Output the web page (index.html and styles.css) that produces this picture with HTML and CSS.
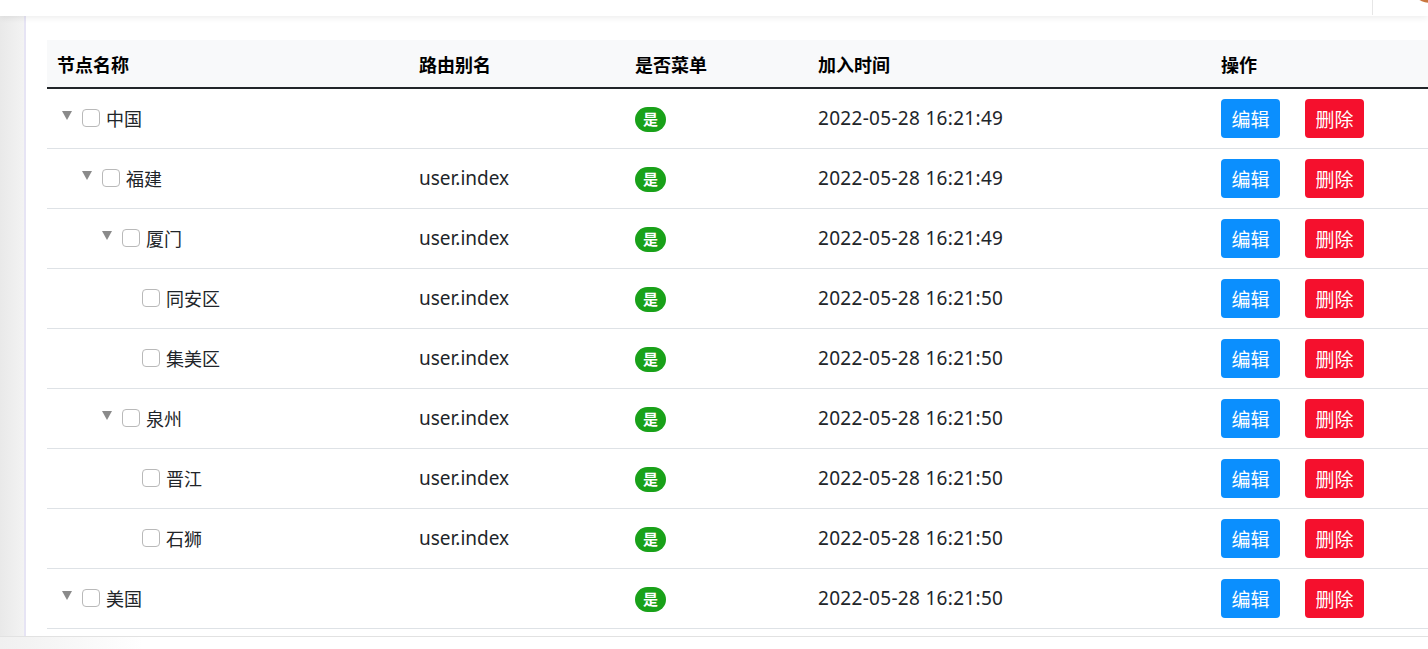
FILE: index.html
```html
<!DOCTYPE html>
<html>
<head>
<meta charset="UTF-8">
<title>节点列表</title>
<link rel="stylesheet" href="styles.css">
</head>
<body>

<div class="topbar">
	<div class="sep"></div>
	<div class="avatar"></div>
</div>

<div class="wrap">
	<div class="side"></div>
	<div class="main">
		<table class="tbl">
			<thead>
				<tr>
					<th class="c1">节点名称</th>
					<th class="c2">路由别名</th>
					<th class="c3">是否菜单</th>
					<th class="c4">加入时间</th>
					<th class="c5">操作</th>
				</tr>
			</thead>
			<tbody>
				<tr>
					<td><div class="node lv0"><span class="tog"><i></i></span><span class="chk"></span><span>中国</span></div></td>
					<td></td>
					<td><span class="badge">是</span></td>
					<td class="time">2022-05-28 16:21:49</td>
					<td><button class="btn edit">编辑</button><button class="btn del">删除</button></td>
				</tr>
				<tr>
					<td><div class="node lv1"><span class="tog"><i></i></span><span class="chk"></span><span>福建</span></div></td>
					<td>user.index</td>
					<td><span class="badge">是</span></td>
					<td class="time">2022-05-28 16:21:49</td>
					<td><button class="btn edit">编辑</button><button class="btn del">删除</button></td>
				</tr>
				<tr>
					<td><div class="node lv2"><span class="tog"><i></i></span><span class="chk"></span><span>厦门</span></div></td>
					<td>user.index</td>
					<td><span class="badge">是</span></td>
					<td class="time">2022-05-28 16:21:49</td>
					<td><button class="btn edit">编辑</button><button class="btn del">删除</button></td>
				</tr>
				<tr>
					<td><div class="node lv3"><span class="tog"></span><span class="chk"></span><span>同安区</span></div></td>
					<td>user.index</td>
					<td><span class="badge">是</span></td>
					<td class="time">2022-05-28 16:21:50</td>
					<td><button class="btn edit">编辑</button><button class="btn del">删除</button></td>
				</tr>
				<tr>
					<td><div class="node lv3"><span class="tog"></span><span class="chk"></span><span>集美区</span></div></td>
					<td>user.index</td>
					<td><span class="badge">是</span></td>
					<td class="time">2022-05-28 16:21:50</td>
					<td><button class="btn edit">编辑</button><button class="btn del">删除</button></td>
				</tr>
				<tr>
					<td><div class="node lv2"><span class="tog"><i></i></span><span class="chk"></span><span>泉州</span></div></td>
					<td>user.index</td>
					<td><span class="badge">是</span></td>
					<td class="time">2022-05-28 16:21:50</td>
					<td><button class="btn edit">编辑</button><button class="btn del">删除</button></td>
				</tr>
				<tr>
					<td><div class="node lv3"><span class="tog"></span><span class="chk"></span><span>晋江</span></div></td>
					<td>user.index</td>
					<td><span class="badge">是</span></td>
					<td class="time">2022-05-28 16:21:50</td>
					<td><button class="btn edit">编辑</button><button class="btn del">删除</button></td>
				</tr>
				<tr>
					<td><div class="node lv3"><span class="tog"></span><span class="chk"></span><span>石狮</span></div></td>
					<td>user.index</td>
					<td><span class="badge">是</span></td>
					<td class="time">2022-05-28 16:21:50</td>
					<td><button class="btn edit">编辑</button><button class="btn del">删除</button></td>
				</tr>
				<tr>
					<td><div class="node lv0"><span class="tog"><i></i></span><span class="chk"></span><span>美国</span></div></td>
					<td></td>
					<td><span class="badge">是</span></td>
					<td class="time">2022-05-28 16:21:50</td>
					<td><button class="btn edit">编辑</button><button class="btn del">删除</button></td>
				</tr>
			</tbody>
		</table>
	</div>
</div>

<div class="foot"></div>

</body>
</html>
```

FILE: styles.css
```css
body
{
	margin: 0;
	background-color: #fff;
	font-family: "Noto Sans", "Noto Sans CJK SC", sans-serif;
	color: #212529;
	overflow: hidden;
}

.topbar
{
	position: relative;
	z-index: 2;
	height: 16px;
	background-color: #fff;
	box-shadow: 0 2px 6px rgba(0, 0, 0, 0.07);
	display: flex;
	justify-content: flex-end;
	overflow: hidden;
}
.sep
{
	width: 1px;
	height: 15px;
	background-color: #e6e6e6;
	margin-right: 34px;
}
.avatar
{
	width: 48px;
	height: 48px;
	border-radius: 50%;
	background-color: #c9763f;
	margin-top: -45px;
	margin-right: -27px;
}

.wrap
{
	display: flex;
	height: 620px;
}
.side
{
	width: 24px;
	flex-shrink: 0;
	background: linear-gradient(to right, #e9e9e9, #f3f3f3);
	border-right: 2px solid #e6e4f4;
}
.main
{
	flex: 1;
	background-color: #fff;
	padding: 24px 0 0 21px;
	overflow: hidden;
}

.tbl
{
	width: 1500px;
	table-layout: fixed;
	border-collapse: collapse;
	font-size: 19px;
}
.tbl th, .tbl td
{
	box-sizing: border-box;
}
.c1 { width: 362px; }
.c2 { width: 216px; }
.c3 { width: 183px; }
.c4 { width: 403px; }
.c5 { width: 336px; }

.tbl th
{
	background-color: #f8f9fa;
	height: 48px;
	padding: 0 10px;
	text-align: left;
	font-size: 18px;
	font-weight: bold;
	color: #000;
	border-bottom: 2px solid #212529;
}
.tbl td
{
	height: 60px;
	padding: 0 10px;
	border-bottom: 1px solid #dee2e6;
	vertical-align: middle;
	white-space: nowrap;
}
.time
{
	letter-spacing: 0.3px;
}

.node
{
	display: flex;
	align-items: center;
	font-size: 18px;
}
.lv1 { padding-left: 20px; }
.lv2 { padding-left: 40px; }
.lv3 { padding-left: 60px; }

.tog
{
	width: 25px;
	height: 18px;
	flex-shrink: 0;
}
.tog i
{
	display: block;
	width: 0;
	height: 0;
	margin: 2px 0 0 5px;
	border-left: 5.5px solid transparent;
	border-right: 5.5px solid transparent;
	border-top: 9px solid #8a8a8a;
}
.chk
{
	width: 16px;
	height: 16px;
	border: 1px solid #b9b9b9;
	border-radius: 4px;
	background-color: #fff;
	margin-right: 6px;
	flex-shrink: 0;
}

.badge
{
	display: inline-block;
	background-color: #19a119;
	color: #fff;
	font-size: 15px;
	font-weight: bold;
	line-height: 17px;
	padding: 4px 8px;
	border-radius: 13px;
}

.btn
{
	font-family: "Noto Sans CJK SC", sans-serif;
	font-size: 19px;
	color: #fff;
	border: 0;
	border-radius: 4px;
	width: 59px;
	height: 39px;
	padding: 0;
	vertical-align: middle;
	cursor: pointer;
}
.edit
{
	background-color: #0b8ffe;
	margin-right: 25px;
}
.del
{
	background-color: #f5102d;
}

.foot
{
	height: 13px;
	border-top: 1px solid #e2e2e2;
	background: linear-gradient(to right, #f0f0f0, #fff 10%);
}
```
